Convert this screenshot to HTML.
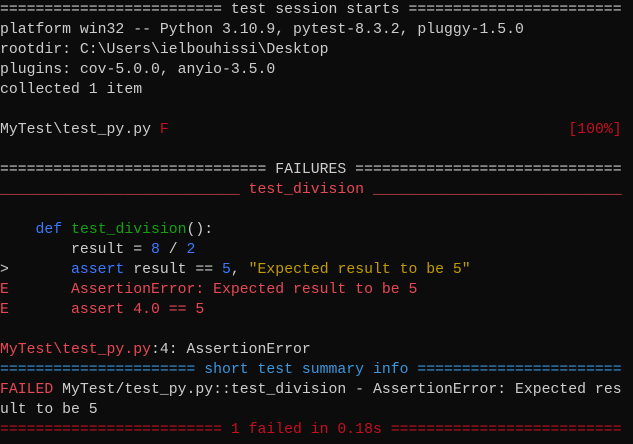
<!DOCTYPE html>
<html><head><meta charset="utf-8"><style>
html,body{margin:0;padding:0;background:#0c0c0c;width:633px;height:444px;overflow:hidden}
pre{margin:0;padding:0;font-family:"Liberation Mono","DejaVu Sans Mono",monospace;font-size:14.8px;line-height:20px;color:#cccccc;white-space:pre}
.r{color:#e74856}.dr{color:#c50f1f}.g{color:#13a10e}.b{color:#3b78ff}.y{color:#c19c00}.c{color:#3a96dd}
.fw{display:inline-block;width:621px;overflow:hidden;vertical-align:top;height:20px}
</style></head><body><pre>========================= test session starts ========================
platform win32 -- Python 3.10.9, pytest-8.3.2, pluggy-1.5.0
rootdir: C:\Users\ielbouhissi\Desktop
plugins: cov-5.0.0, anyio-3.5.0
collected 1 item

MyTest\test_py.py <span class="dr">F</span>                                             <span class="dr">[100%]</span>

============================== FAILURES ==============================
<span class="r">___________________________ test_division ____________________________</span>

    <span class="b">def</span> <span class="g">test_division</span>():
        result = <span class="b">8</span> / <span class="b">2</span>
&gt;       <span class="b">assert</span> result == <span class="b">5</span>, <span class="y">"Expected result to be 5"</span>
<span class="r">E       AssertionError: Expected result to be 5</span>
<span class="r">E       assert 4.0 == 5</span>

<span class="r">MyTest\test_py.py</span>:4: AssertionError
<span class="c">====================== short test summary info =======================</span>
<span class="r">FAILED</span> MyTest/test_py.py::test_division - AssertionError: Expected res
ult to be 5
<span class="dr fw">========================= 1 failed in 0.18s ==============================</span></pre></body></html>
